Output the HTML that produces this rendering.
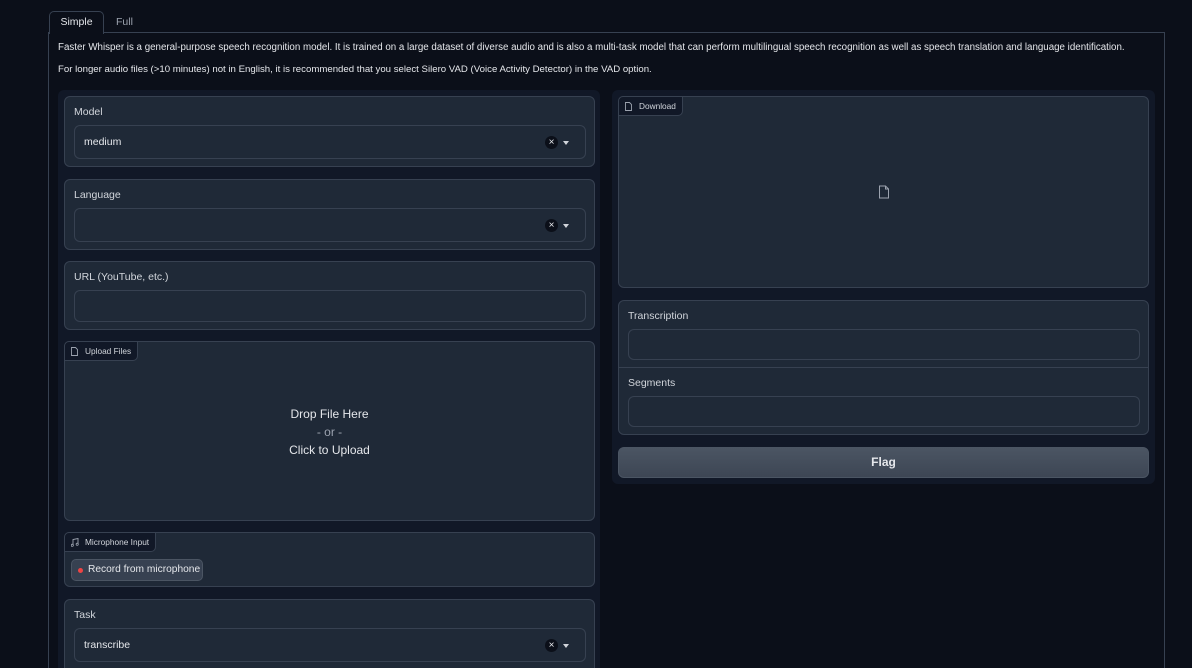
<!DOCTYPE html><html><head><style>
*{box-sizing:border-box;margin:0;padding:0}
html,body{width:1192px;height:668px;overflow:hidden}
body{background:#0b0f19;font-family:"Liberation Sans",sans-serif;color:#e5e7eb;position:relative}
.a{position:absolute}
.blk{position:absolute;background:#1f2937;border:1px solid #374151;border-radius:6px}
.inp{position:absolute;background:#1f2937;border:1px solid #374151;border-radius:6px}
.lbl{position:absolute;font-size:10.5px;color:#d1d5db;white-space:nowrap}
.tag{position:absolute;left:-1px;top:-1px;height:20px;padding:0 6px 0 20px;font-size:8.3px;line-height:19px;color:#d1d5db;background:#111827;border:1px solid #374151;border-radius:5px 0 5px 0;white-space:nowrap}
.tag svg{position:absolute;left:6px;top:5px}
.x{position:absolute;width:13px;height:13px;border-radius:50%;background:#0b0f19;color:#e5e7eb;font-size:10px;line-height:13px;text-align:center}
.ar{position:absolute;width:0;height:0;border-left:3px solid transparent;border-right:3px solid transparent;border-top:4px solid #d1d5db}
</style></head><body>
<div class="a" style="left:48px;top:32px;width:1117px;height:640px;border:1px solid #374151;border-bottom:none"></div>
<div class="a" style="left:49px;top:11px;width:55px;height:23px;background:#0b0f19;border:1px solid #374151;border-bottom:none;border-radius:5px 5px 0 0;font-size:10.5px;text-align:center;line-height:21px">Simple</div>
<div class="a" style="left:116px;top:16px;font-size:10.5px;color:#9ca3af">Full</div>
<div class="a" style="left:58px;top:42px;font-size:9.75px;white-space:nowrap">Faster Whisper is a general-purpose speech recognition model. It is trained on a large dataset of diverse audio and is also a multi-task model that can perform multilingual speech recognition as well as speech translation and language identification.</div>
<div class="a" style="left:58px;top:64px;font-size:9.65px;white-space:nowrap">For longer audio files (&gt;10 minutes) not in English, it is recommended that you select Silero VAD (Voice Activity Detector) in the VAD option.</div>
<div class="a" style="left:58px;top:90px;width:542px;height:590px;background:#111827;border-radius:6px"></div>
<div class="a" style="left:612px;top:90px;width:543px;height:394px;background:#111827;border-radius:6px"></div>

<div class="blk" style="left:64px;top:96px;width:531px;height:71px"><div class="lbl" style="left:9px;top:9px">Model</div>
<div class="inp" style="left:9px;top:28px;width:512px;height:34px"><div class="lbl" style="left:9px;top:10px;color:#e5e7eb">medium</div><div class="x" style="left:470px;top:10px">×</div><div class="ar" style="left:488px;top:15px"></div></div></div>

<div class="blk" style="left:64px;top:179px;width:531px;height:71px"><div class="lbl" style="left:9px;top:9px">Language</div>
<div class="inp" style="left:9px;top:28px;width:512px;height:34px"><div class="x" style="left:470px;top:10px">×</div><div class="ar" style="left:488px;top:15px"></div></div></div>

<div class="blk" style="left:64px;top:261px;width:531px;height:69px"><div class="lbl" style="left:9px;top:9px">URL (YouTube, etc.)</div>
<div class="inp" style="left:9px;top:28px;width:512px;height:32px"></div></div>

<div class="blk" style="left:64px;top:341px;width:531px;height:180px"><div class="tag"><svg width="7" height="9" viewBox="0 0 7 9"><path d="M.5.5h4l2 2v6h-6z" fill="none" stroke="#9ca3af" stroke-width=".9"/></svg>Upload Files</div>
<div class="a" style="left:0;width:529px;top:63px;text-align:center;font-size:12px;line-height:18px;color:#e5e7eb">Drop File Here<br><span style="color:#9ca3af">- or -</span><br>Click to Upload</div></div>

<div class="blk" style="left:64px;top:532px;width:531px;height:55px"><div class="tag"><svg width="8" height="9" viewBox="0 0 8 9"><path d="M2 7V1.5l5-1V6" fill="none" stroke="#9ca3af" stroke-width=".9"/><circle cx="1.3" cy="7.3" r="1.1" fill="none" stroke="#9ca3af" stroke-width=".8"/><circle cx="6.2" cy="6.3" r="1.1" fill="none" stroke="#9ca3af" stroke-width=".8"/></svg>Microphone Input</div>
<div class="a" style="left:6px;top:26px;width:132px;height:22px;background:#374151;border:1px solid #4b5563;border-radius:5px;font-size:10.2px;line-height:20px;padding-left:16px;white-space:nowrap">Record from microphone<div class="a" style="left:6px;top:8px;width:5px;height:5px;border-radius:50%;background:#ef4444"></div></div></div>

<div class="blk" style="left:64px;top:599px;width:531px;height:80px"><div class="lbl" style="left:9px;top:9px">Task</div>
<div class="inp" style="left:9px;top:28px;width:512px;height:34px"><div class="lbl" style="left:9px;top:10px;color:#e5e7eb">transcribe</div><div class="x" style="left:470px;top:10px">×</div><div class="ar" style="left:488px;top:15px"></div></div></div>

<div class="blk" style="left:618px;top:96px;width:531px;height:192px"><div class="tag"><svg width="7" height="9" viewBox="0 0 7 9"><path d="M.5.5h4l2 2v6h-6z" fill="none" stroke="#9ca3af" stroke-width=".9"/></svg>Download</div>
<svg class="a" style="left:259px;top:88px" width="12" height="14" viewBox="0 0 12 14"><path d="M1.5 1h6l3 3v9h-9z M7.5 1v3h3" fill="none" stroke="#9ca3af" stroke-width="1"/></svg></div>

<div class="blk" style="left:618px;top:300px;width:531px;height:135px">
<div class="lbl" style="left:9px;top:9px">Transcription</div>
<div class="inp" style="left:9px;top:28px;width:512px;height:31px"></div>
<div class="a" style="left:0;top:66px;width:529px;height:1px;background:#374151"></div>
<div class="lbl" style="left:9px;top:76px">Segments</div>
<div class="inp" style="left:9px;top:95px;width:512px;height:31px"></div></div>

<div class="a" style="left:618px;top:447px;width:531px;height:31px;background:linear-gradient(#4b5563,#3d4654);border:1px solid #4b5563;border-radius:6px;text-align:center;font-size:12px;font-weight:bold;line-height:29px">Flag</div>
</body></html>
